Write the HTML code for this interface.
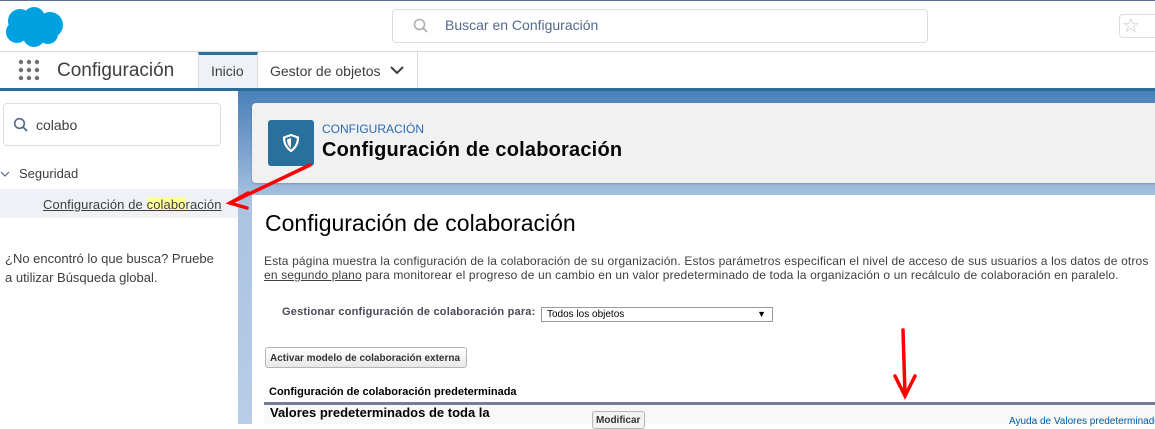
<!DOCTYPE html>
<html><head><meta charset="utf-8"><style>
*{box-sizing:border-box;margin:0;padding:0}
body{width:1155px;height:424px;overflow:hidden;font-family:"Liberation Sans",Arial,sans-serif;background:#fff;position:relative;color:#16325c}
.abs{position:absolute}
</style></head><body>
<div class="abs" style="left:0;top:0;width:1155px;height:1px;background:#5a7090"></div>
<svg class="abs" style="left:4px;top:5px" width="60" height="42" viewBox="0 0 60 42"><g fill="#00a1e0"><circle cx="16" cy="16" r="12"/><circle cx="30" cy="13" r="11"/><circle cx="46" cy="20" r="13"/><circle cx="13" cy="27" r="11"/><circle cx="30" cy="31" r="11"/><circle cx="44" cy="29" r="10"/></g></svg>
<div class="abs" style="left:392px;top:9px;width:536px;height:34px;border:1px solid #d8dde6;border-radius:4px"></div>
<svg class="abs" style="left:413px;top:18px" width="16" height="16" viewBox="0 0 16 16"><circle cx="6.5" cy="6.5" r="5" fill="none" stroke="#b0adab" stroke-width="1.6"/><line x1="10" y1="10" x2="14" y2="14" stroke="#b0adab" stroke-width="1.8"/></svg>
<div class="abs" style="left:445px;top:17px;font-size:14px;color:#54698d">Buscar en Configuración</div>
<div class="abs" style="left:1119px;top:14px;width:40px;height:24px;border:1px solid #d8dde6;border-radius:4px"></div>
<div class="abs" style="left:1122px;top:13px;font-size:20px;color:#c9c7c5">☆</div>
<div class="abs" style="left:0;top:51px;width:1155px;height:1px;background:#dddbda"></div>
<svg class="abs" style="left:18px;top:59px" width="22" height="22"><g fill="#706e6b"><circle cx="3" cy="3" r="2.2"/><circle cx="11" cy="3" r="2.2"/><circle cx="19" cy="3" r="2.2"/><circle cx="3" cy="11" r="2.2"/><circle cx="11" cy="11" r="2.2"/><circle cx="19" cy="11" r="2.2"/><circle cx="3" cy="19" r="2.2"/><circle cx="11" cy="19" r="2.2"/><circle cx="19" cy="19" r="2.2"/></g></svg>
<div class="abs" style="left:57px;top:60px;font-size:19px;color:#3e3e3c">Configuración</div>
<div class="abs" style="left:198px;top:52px;width:60px;height:36px;background:#eef1f6;border-top:3px solid #2a739e;border-right:1px solid #dddbda;border-left:1px solid #dddbda"></div>
<div class="abs" style="left:211px;top:63px;font-size:14px;color:#3e3e3c">Inicio</div>
<div class="abs" style="left:270px;top:63px;font-size:14px;color:#3e3e3c">Gestor de objetos</div>
<svg class="abs" style="left:390px;top:65px" width="14" height="10"><path d="M1 2 L7 8 L13 2" fill="none" stroke="#3e3e3c" stroke-width="2"/></svg>
<div class="abs" style="left:417px;top:52px;width:1px;height:36px;background:#dddbda"></div>
<div class="abs" style="left:0;top:88px;width:1155px;height:3px;background:#2a6b99"></div>
<div class="abs" style="left:238px;top:91px;width:917px;height:333px;background:linear-gradient(#4a80b8,#7ba3cf 60px,#a9c3e1 110px,#b8cde6)"></div>
<div class="abs" style="left:0;top:91px;width:238px;height:333px;background:#fff"></div>
<div class="abs" style="left:3px;top:103px;width:218px;height:43px;border:1px solid #d8dde6;border-radius:4px"></div>
<svg class="abs" style="left:13px;top:117px" width="16" height="16" viewBox="0 0 16 16"><circle cx="6.5" cy="6.5" r="4.8" fill="none" stroke="#54698d" stroke-width="1.6"/><line x1="10" y1="10" x2="14" y2="14" stroke="#54698d" stroke-width="1.8"/></svg>
<div class="abs" style="left:36px;top:117px;font-size:14px;color:#3e3e3c">colabo</div>
<svg class="abs" style="left:0;top:170px" width="10" height="8"><path d="M1 2 L5 6 L9 2" fill="none" stroke="#54698d" stroke-width="1.2"/></svg>
<div class="abs" style="left:19px;top:166px;font-size:13px;color:#3e3e3c">Seguridad</div>
<div class="abs" style="left:0;top:189px;width:238px;height:29px;background:#eef1f6"></div>
<div class="abs" style="left:43px;top:197px;font-size:13px;color:#3e3e3c;text-decoration:underline;letter-spacing:0.1px">Configuración de <span style="background:#ffffa0">colabo</span>ración</div>
<div class="abs" style="left:5px;top:249px;font-size:13px;color:#3e3e3c;line-height:19px">¿No encontró lo que busca? Pruebe<br>a utilizar Búsqueda global.</div>
<div class="abs" style="left:252px;top:103px;width:910px;height:80px;background:#f1f1f1;border-radius:4px;box-shadow:0 1px 2px rgba(0,0,0,.2)"></div>
<div class="abs" style="left:268px;top:120px;width:46px;height:46px;background:#2a709c;border-radius:3px"></div>
<svg class="abs" style="left:280px;top:132px" width="22" height="22" viewBox="0 0 22 22"><path d="M11 3 L18 5.5 Q18 14 11 19 Q4 14 4 5.5 Z" fill="none" stroke="#fff" stroke-width="2.2"/><path d="M11 6 L11 16 Q7 13 7 7.5 Z" fill="#fff"/></svg>
<div class="abs" style="left:322px;top:122px;font-size:12px;color:#2a6ab0">CONFIGURACIÓN</div>
<div class="abs" style="left:322px;top:139px;font-size:20px;font-weight:bold;color:#080707;letter-spacing:0.2px">Configuración de colaboración</div>
<div class="abs" style="left:252px;top:195px;width:903px;height:229px;background:#fff"></div>
<div class="abs" style="left:265px;top:210px;font-size:23px;color:#000">Configuración de colaboración</div>
<div class="abs" style="left:264px;top:254px;font-size:12px;color:#3e3e3c;line-height:14px;white-space:nowrap;letter-spacing:0.15px">Esta página muestra la configuración de la colaboración de su organización. Estos parámetros especifican el nivel de acceso de sus usuarios a los datos de otros<br><u>en segundo plano</u> para monitorear el progreso de un cambio en un valor predeterminado de toda la organización o un recálculo de colaboración en paralelo.</div>
<div class="abs" style="left:282px;top:306px;font-size:11px;font-weight:bold;color:#4a4a56;letter-spacing:0.2px">Gestionar configuración de colaboración para:</div>
<div class="abs" style="left:541px;top:307px;width:232px;height:15px;border:1px solid #999;font-size:10px;padding-left:5px;line-height:13px;color:#000">Todos los objetos<span style="position:absolute;right:6px;font-size:9px">▼</span></div>
<div class="abs" style="left:265px;top:347px;width:202px;height:21px;border:1px solid #b5b5b5;border-radius:3px;background:linear-gradient(#fff,#e8e8e8);font-size:10px;font-weight:bold;color:#333;padding:5px 0 0 4px">Activar modelo de colaboración externa</div>
<div class="abs" style="left:269px;top:386px;font-size:11px;font-weight:bold;color:#000">Configuración de colaboración predeterminada</div>
<div class="abs" style="left:264px;top:402px;width:891px;height:22px;background:#f8f8f8;border-top:3px solid #747e96"></div>
<div class="abs" style="left:270px;top:405px;font-size:13px;font-weight:bold;color:#000">Valores predeterminados de toda la</div>
<div class="abs" style="left:592px;top:411px;width:53px;height:18px;border:1px solid #b5b5b5;border-radius:3px;background:#f2f2f2;font-size:10px;font-weight:bold;color:#333;padding:3px 0 0 3px">Modificar</div>
<div class="abs" style="left:1009px;top:416px;font-size:10px;color:#015ba7;white-space:nowrap">Ayuda de Valores predeterminados</div>
<svg class="abs" style="left:0;top:0" width="1155" height="424"><g stroke="#f00" stroke-width="3.5" fill="none" stroke-linecap="round"><line x1="310" y1="165" x2="230" y2="203"/><path d="M248 193 L230 203 L247 208"/><line x1="903" y1="330" x2="905" y2="394"/><path d="M895 376 L905 396 L915 376"/></g></svg>
</body></html>
